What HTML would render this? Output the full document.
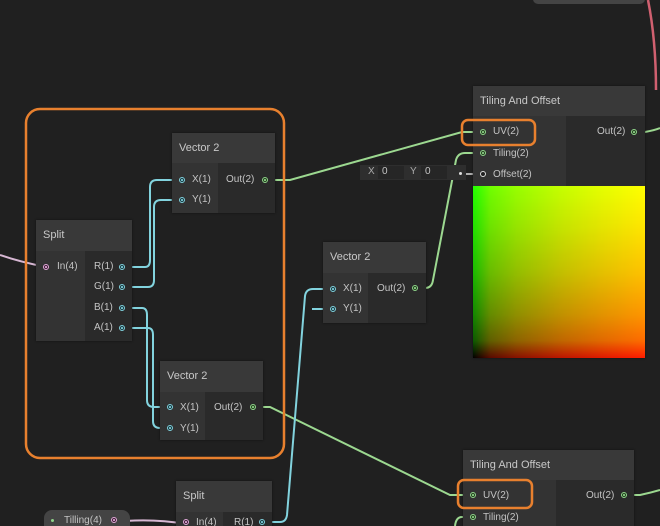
<!DOCTYPE html><html><head><style>
html,body{margin:0;width:660px;height:526px;overflow:hidden}
body{background:#202020;position:relative;font-family:"Liberation Sans",sans-serif;color:#c4c4c4;font-size:10px}
.n{position:absolute;background:#2a2a2a;box-shadow:0 0 2px #111}
.h{position:absolute;left:0;right:0;top:0;background:#393939;font-size:11px;padding-left:7px;box-sizing:border-box;color:#c8c8c8}
.ic{position:absolute;left:0;background:#333}
.t{position:absolute;white-space:nowrap}
.p{position:absolute;width:6px;height:6px;border-radius:50%;box-sizing:border-box}
.c{border:1.5px solid #7fd0dc;background:#1c3a40}
.c:after,.g:after,.k:after{content:"";position:absolute;left:1px;top:1px;width:1.5px;height:1.5px;border-radius:50%;background:#7fd0dc}
.g{border:1.5px solid #8fd48a;background:#24401f}.g:after{background:#8fd48a}
.k{border:1.5px solid #e0a8d8;background:#402038}.k:after{background:#e0a8d8}
.o{border:1.2px solid #ddd;background:#202020}
</style></head><body>
<svg width="660" height="526" style="position:absolute;left:0;top:0" fill="none" stroke-width="2">
<path d="M0 255 Q20 262 46 267" stroke="#d7b7d3"/>
<path d="M125 267 H145 Q150 267 150 260 V187 Q150 180 157 180 H182" stroke="#82d3de"/>
<path d="M125 287 H148 Q154 287 154 280 V207 Q154 200 161 200 H182" stroke="#82d3de"/>
<path d="M125 308 H142 Q147 308 147 315 V400 Q147 407 154 407 H170" stroke="#82d3de"/>
<path d="M125 328 H148 Q153 328 153 335 V421 Q153 428 160 428 H170" stroke="#82d3de"/>
<path d="M265 180 H290 L462 132 H483" stroke="#9cd890"/>
<path d="M415 288 H425 Q432 288 433 280 L456 160 Q458 153 465 153 H483" stroke="#9cd890"/>
<path d="M253 407 H270 L450 495 H473" stroke="#9cd890"/>
<path d="M634 132 H645 Q655 130 660 128" stroke="#9cd890"/>
<path d="M624 495 H640 Q650 493 660 490" stroke="#9cd890"/>
<path d="M473 517 H462 Q456 517 455 526" stroke="#9cd890"/>
<path d="M264 522 H280 Q286 522 287 515 L305 296 Q306 289 313 289 H333" stroke="#82d3de"/>
<path d="M312 309 H333" stroke="#82d3de"/>
<path d="M115 522 Q150 518 186 524" stroke="#d7b7d3"/>
<path d="M473 174 H463" stroke="#ddd" stroke-width="1.5"/>
<path d="M648 0 Q656 40 656 90" stroke="#d06070" stroke-width="2.5"/>
<rect x="26" y="109" width="258" height="349" rx="14" stroke="#e8802e" stroke-width="2.5"/>
</svg>
<div style="position:absolute;left:533px;top:-6px;width:112px;height:10px;border-radius:5px;background:#444"></div>

<div class="n" style="left:172px;top:133px;width:103px;height:80px"><div class="h" style="height:30px;line-height:30px">Vector 2</div><div class="ic" style="top:30px;width:46px;height:50px"></div>
<div class="p c" style="left:7px;top:44px"></div><span class="t" style="left:20px;top:41px">X(1)</span>
<div class="p c" style="left:7px;top:64px"></div><span class="t" style="left:20px;top:61px">Y(1)</span>
<span class="t" style="left:54px;top:41px">Out(2)</span><div class="p g" style="left:90px;top:44px"></div></div>

<div class="n" style="left:36px;top:220px;width:96px;height:121px"><div class="h" style="height:31px;line-height:31px">Split</div><div class="ic" style="top:31px;width:49px;height:90px"></div>
<div class="p k" style="left:7px;top:44px"></div><span class="t" style="left:21px;top:41px">In(4)</span>
<span class="t" style="left:58px;top:41px">R(1)</span><div class="p c" style="left:83px;top:44px"></div>
<span class="t" style="left:58px;top:61px">G(1)</span><div class="p c" style="left:83px;top:64px"></div>
<span class="t" style="left:58px;top:82px">B(1)</span><div class="p c" style="left:83px;top:85px"></div>
<span class="t" style="left:58px;top:102px">A(1)</span><div class="p c" style="left:83px;top:105px"></div></div>

<div class="n" style="left:160px;top:361px;width:103px;height:79px"><div class="h" style="height:31px;line-height:31px">Vector 2</div><div class="ic" style="top:31px;width:45px;height:48px"></div>
<div class="p c" style="left:7px;top:43px"></div><span class="t" style="left:20px;top:41px">X(1)</span>
<div class="p c" style="left:7px;top:64px"></div><span class="t" style="left:20px;top:62px">Y(1)</span>
<span class="t" style="left:54px;top:41px">Out(2)</span><div class="p g" style="left:90px;top:43px"></div></div>

<div class="n" style="left:323px;top:242px;width:103px;height:81px"><div class="h" style="height:31px;line-height:31px">Vector 2</div><div class="ic" style="top:31px;width:45px;height:50px"></div>
<div class="p c" style="left:7px;top:44px"></div><span class="t" style="left:20px;top:41px">X(1)</span>
<div class="p c" style="left:7px;top:64px"></div><span class="t" style="left:20px;top:61px">Y(1)</span>
<span class="t" style="left:54px;top:41px">Out(2)</span><div class="p g" style="left:89px;top:43px"></div></div>

<div class="n" style="left:473px;top:86px;width:172px;height:272px"><div class="h" style="height:30px;line-height:30px">Tiling And Offset</div><div class="ic" style="top:30px;width:93px;height:70px"></div>
<div class="p g" style="left:7px;top:43px"></div><span class="t" style="left:20px;top:40px">UV(2)</span>
<div class="p g" style="left:7px;top:64px"></div><span class="t" style="left:20px;top:62px">Tiling(2)</span>
<div class="p o" style="left:7px;top:85px"></div><span class="t" style="left:20px;top:83px">Offset(2)</span>
<span class="t" style="left:124px;top:40px">Out(2)</span><div class="p g" style="left:158px;top:43px"></div>
<div style="position:absolute;left:0;top:100px;width:172px;height:172px;background:linear-gradient(to right,#000 0%,#590800 10%,#871000 25%,#ba1400 50%,#e01800 75%,#ff1c00 100%)"><div style="position:absolute;inset:0;background:linear-gradient(to top,#000 0%,#0a5900 10%,#108700 25%,#18ba00 50%,#1ee000 75%,#22ff00 100%);mix-blend-mode:screen"></div></div></div>

<div style="position:absolute;left:360px;top:165px;width:106px;height:15px;background:#2e2e2e"></div>
<span class="t" style="left:368px;top:166px;color:#aaa">X</span><div style="position:absolute;left:378px;top:166px;width:26px;height:13px;background:#262626"></div><span class="t" style="left:382px;top:166px">0</span>
<span class="t" style="left:410px;top:166px;color:#aaa">Y</span><div style="position:absolute;left:421px;top:166px;width:26px;height:13px;background:#262626"></div><span class="t" style="left:425px;top:166px">0</span>
<div style="position:absolute;left:459px;top:172px;width:3px;height:3px;border-radius:50%;background:#ddd"></div>

<div class="n" style="left:463px;top:450px;width:171px;height:80px"><div class="h" style="height:30px;line-height:30px">Tiling And Offset</div><div class="ic" style="top:30px;width:93px;height:50px"></div>
<div class="p g" style="left:7px;top:42px"></div><span class="t" style="left:20px;top:40px">UV(2)</span>
<div class="p g" style="left:7px;top:64px"></div><span class="t" style="left:20px;top:62px">Tiling(2)</span>
<span class="t" style="left:123px;top:40px">Out(2)</span><div class="p g" style="left:158px;top:42px"></div></div>

<div class="n" style="left:176px;top:481px;width:96px;height:50px"><div class="h" style="height:31px;line-height:31px">Split</div><div class="ic" style="top:31px;width:47px;height:20px"></div>
<div class="p k" style="left:7px;top:38px"></div><span class="t" style="left:20px;top:36px">In(4)</span>
<span class="t" style="left:58px;top:36px">R(1)</span><div class="p c" style="left:83px;top:38px"></div></div>

<div style="position:absolute;left:44px;top:510px;width:86px;height:24px;border-radius:8px;background:#444"></div>
<div style="position:absolute;left:51px;top:519px;width:3px;height:3px;border-radius:50%;background:#8fd48a"></div>
<span class="t" style="left:64px;top:515px">Tilling(4)</span><div class="p k" style="left:111px;top:517px"></div>

<svg width="660" height="526" style="position:absolute;left:0;top:0" fill="none">
<rect x="462" y="120" width="73" height="25" rx="6" stroke="#e8802e" stroke-width="2.5"/>
<rect x="458" y="480" width="74" height="28" rx="6" stroke="#e8802e" stroke-width="2.5"/>
</svg>
</body></html>
